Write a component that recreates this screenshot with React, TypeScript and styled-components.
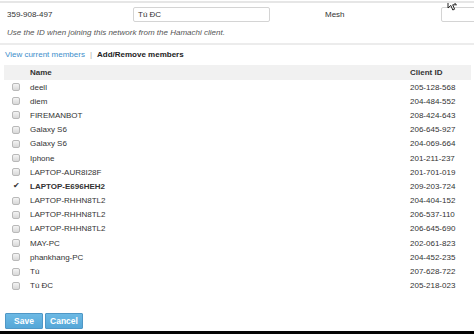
import React from "react";
import styled, { createGlobalStyle } from "styled-components";

interface IMember {
  name: string;
  clientId: string;
  checked?: boolean;
}

//fake datas
const members: IMember[] = [
  { name: "deell", clientId: "205-128-568" },
  { name: "diem", clientId: "204-484-552" },
  { name: "FIREMANBOT", clientId: "208-424-643" },
  { name: "Galaxy S6", clientId: "206-645-927" },
  { name: "Galaxy S6", clientId: "204-069-664" },
  { name: "Iphone", clientId: "201-211-237" },
  { name: "LAPTOP-AUR8I28F", clientId: "201-701-019" },
  { name: "LAPTOP-E696HEH2", clientId: "209-203-724", checked: true },
  { name: "LAPTOP-RHHN8TL2", clientId: "204-404-152" },
  { name: "LAPTOP-RHHN8TL2", clientId: "206-537-110" },
  { name: "LAPTOP-RHHN8TL2", clientId: "206-645-690" },
  { name: "MAY-PC", clientId: "202-061-823" },
  { name: "phankhang-PC", clientId: "204-452-235" },
  { name: "Tú", clientId: "207-628-722" },
  { name: "Tú ĐC", clientId: "205-218-023" },
];

const GlobalStyle = createGlobalStyle`
  html, body {
    margin: 0;
    padding: 0;
    background: #fff;
    overflow: hidden;
  }
  body {
    font-family: "Liberation Sans", Arial, sans-serif;
    font-size: 8px;
    color: #333;
  }
`;

const Page = styled.div`
  position: relative;
  width: 474px;
  height: 333px;
  overflow: hidden;
  display: flex;
  flex-direction: column;
  border-top: 2px solid #e6e6e6;
  box-sizing: border-box;
  margin-top: 1px;
`;

const FormRow = styled.div`
  display: flex;
  align-items: center;
  height: 23px;
  padding-left: 7px;
`;

const IdCell = styled.div`
  width: 126px;
  flex-shrink: 0;
`;

const TextBox = styled.div<{ $width: number }>`
  width: ${(p) => p.$width}px;
  height: 15px;
  flex-shrink: 0;
  box-sizing: border-box;
  border: 1px solid #d4d4d4;
  border-radius: 2px;
  background: #fff;
  display: flex;
  align-items: center;
  padding-left: 4px;
`;

const LabelCell = styled.div`
  width: 116px;
  padding-left: 55px;
  flex-shrink: 0;
`;

const Hint = styled.p`
  margin: 0;
  padding-left: 7px;
  height: 13px;
  line-height: 13px;
  font-style: italic;
  color: #555;
`;

const Divider = styled.div`
  height: 2px;
  margin-top: 4px;
  background: #ececec;
`;

const Tabs = styled.div`
  display: flex;
  align-items: center;
  height: 17px;
  padding-left: 5px;
  margin-top: 1px;
`;

const TabLink = styled.span`
  color: #3d8ecb;
`;

const TabSep = styled.span`
  color: #aaa;
  margin: 0 5px;
`;

const TabActive = styled.span`
  font-weight: bold;
  color: #222;
`;

const Table = styled.div`
  margin: 2px 3px 0 4px;
  display: flex;
  flex-direction: column;
`;

const Row = styled.div<{ $header?: boolean }>`
  display: grid;
  grid-template-columns: 26px 380px 1fr;
  align-items: center;
  height: ${(p) => (p.$header ? "15px" : "14.2px")};
  background: ${(p) => (p.$header ? "#f1f1f1" : "transparent")};
  font-weight: ${(p) => (p.$header ? "bold" : "normal")};
  color: #333;
`;

const NameCell = styled.span<{ $bold?: boolean }>`
  font-weight: ${(p) => (p.$bold ? "bold" : "inherit")};
  white-space: nowrap;
`;

const CheckBox = styled.span<{ $checked?: boolean }>`
  width: 8px;
  height: 8px;
  margin-left: 8px;
  box-sizing: border-box;
  border: ${(p) => (p.$checked ? "none" : "1px solid #b9b9b9")};
  border-radius: 2px;
  background: ${(p) =>
    p.$checked ? "transparent" : "linear-gradient(#f4f4f4, #d8d8d8)"};
  display: flex;
  align-items: center;
  justify-content: center;
  font-size: 8px;
  line-height: 8px;
  color: #333;
`;

const Actions = styled.div`
  display: flex;
  gap: 2px;
  padding-left: 5px;
  margin-top: 20px;
`;

const Button = styled.button`
  width: 38px;
  height: 16px;
  padding: 0;
  border: 1px solid #4f97c6;
  border-radius: 1px;
  background: linear-gradient(#6cb9e4, #55a7d8);
  color: #fff;
  font-family: "Liberation Sans", Arial, sans-serif;
  font-size: 8.5px;
  font-weight: bold;
`;

const BottomBar = styled.div`
  position: absolute;
  left: 0;
  right: 0;
  bottom: 0;
  height: 3px;
  background: #050505;
`;

const Cursor = styled.svg`
  position: absolute;
  left: 447px;
  top: -7px;
`;

const App: React.FC = () => {
  return (
    <>
      <GlobalStyle />
      <Page>
        <FormRow>
          <IdCell>359-908-497</IdCell>
          <TextBox $width={137}>Tú ĐC</TextBox>
          <LabelCell>Mesh</LabelCell>
          <TextBox $width={60} />
        </FormRow>
        <Hint>Use the ID when joining this network from the Hamachi client.</Hint>
        <Divider />
        <Tabs>
          <TabLink>View current members</TabLink>
          <TabSep>|</TabSep>
          <TabActive>Add/Remove members</TabActive>
        </Tabs>
        <Table>
          <Row $header>
            <span />
            <span>Name</span>
            <span>Client ID</span>
          </Row>
          {members.map((m, index) => (
            <Row key={index}>
              <CheckBox $checked={m.checked}>{m.checked ? "✔" : null}</CheckBox>
              <NameCell $bold={m.checked}>{m.name}</NameCell>
              <span>{m.clientId}</span>
            </Row>
          ))}
        </Table>
        <Actions>
          <Button>Save</Button>
          <Button>Cancel</Button>
        </Actions>
        <Cursor width="11" height="15" viewBox="0 0 11 15">
          <path
            d="M1 1 L1 12 L3.8 9.4 L5.8 14 L7.6 13.2 L5.7 8.8 L9.5 8.8 Z"
            fill="#fff"
            stroke="#222"
            strokeWidth="1"
            strokeLinejoin="round"
          />
        </Cursor>
        <BottomBar />
      </Page>
    </>
  );
};

export default App;
